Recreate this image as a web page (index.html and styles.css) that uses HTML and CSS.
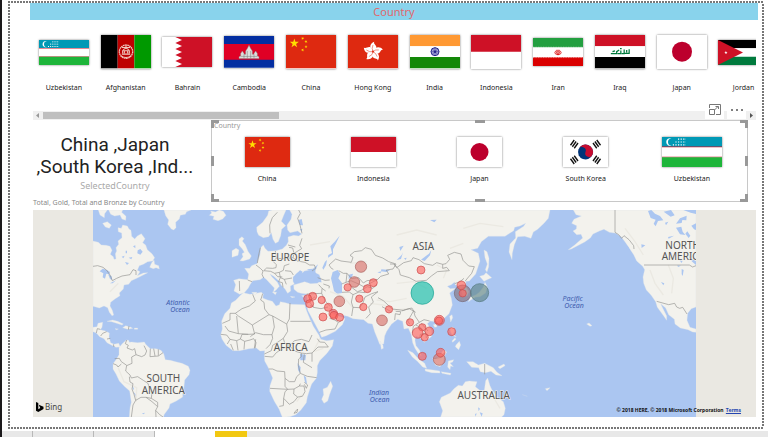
FILE: index.html
```html
<!DOCTYPE html>
<html lang="en">
<head>
<meta charset="utf-8">
<title>Medals by Country</title>
<link rel="stylesheet" href="styles.css">
</head>
<body>
<svg class="defs" width="0" height="0" aria-hidden="true">
  <defs>
    <path id="star" d="M0-6 1.35-1.85H5.7L2.18.71 3.53 4.85 0 2.29-3.53 4.85-2.18.71-5.7-1.85H-1.35Z"/>
    <g id="uz">
      <path fill="#0099b5" d="M0 0H60V10H0Z"/><path fill="#ce1126" d="M0 9.6H60V20.4H0Z"/>
      <path fill="#fff" d="M0 10.2H60V19.8H0Z"/><path fill="#1eb53a" d="M0 20.2H60V30H0Z"/>
      <path fill="#fff" d="M9.5 1.5A3.8 3.8 0 1 0 9.5 8.5 3.3 3.3 0 1 1 9.5 1.5Z"/>
      <path fill="none" stroke="#fff" stroke-width="1.2" stroke-dasharray="1.2 1.4" d="M16 2.2H24M13.4 5H24M10.8 7.8H24"/>
    </g>
    <g id="af">
      <path d="M0 0H20V40H0Z"/><path fill="#be0000" d="M20 0H40V40H20Z"/><path fill="#009900" d="M40 0H60V40H40Z"/>
      <g fill="none" stroke="#f0c9bf"><circle cx="30" cy="20" r="8" stroke-width="1.5" stroke-dasharray="2 .6"/>
      <path stroke-width="1.3" d="M25 23H35M26 22V19Q30 13 34 19V22M28 22V19H32V22M30 12V15M24 25Q30 29 36 25M25 15H35"/></g>
    </g>
    <g id="bh"><path fill="#fff" d="M0 0H60V36H0Z"/><path fill="#ce1126" d="M16 0H60V36H16L24 32.4 16 28.8 24 25.2 16 21.6 24 18 16 14.4 24 10.8 16 7.2 24 3.6Z"/></g>
    <g id="kh">
      <path fill="#032ea1" d="M0 0H60V38H0Z"/><path fill="#e00025" d="M0 9.5H60V28.500H0Z"/>
      <path fill="#ddd" stroke="#888" stroke-width=".5" d="M18 27V25L20 24V21L22 18 24 21V22H26V18L28 15 30 11 32 15 34 18V22H36V21L38 18 40 21V24L42 25V27Z"/>
      <path stroke="#777" stroke-width=".6" d="M20 24.500H40M24 22V27M28 18V27M32 18V27M36 22V27"/>
    </g>
    <g id="cn">
      <path fill="#de2910" d="M0 0H60V40H0Z"/>
      <g fill="#ffde00"><use href="#star" transform="translate(10 10) scale(.95)"/>
      <use href="#star" transform="translate(20 4) rotate(25) scale(.34)"/><use href="#star" transform="translate(24 8) rotate(45) scale(.34)"/>
      <use href="#star" transform="translate(24 14) scale(.34)"/><use href="#star" transform="translate(20 18) rotate(20) scale(.34)"/></g>
    </g>
    <g id="hk">
      <path fill="#de2910" d="M0 0H60V40H0Z"/>
      <g transform="translate(30 20)" fill="#fff">
        <path id="petal" d="M0-1C-5-4-4-10 1.500-12 0-9 5-8 4-4 3-1 1-1 0-1Z"/>
        <use href="#petal" transform="rotate(72)"/><use href="#petal" transform="rotate(144)"/><use href="#petal" transform="rotate(216)"/><use href="#petal" transform="rotate(288)"/>
        <path fill="none" stroke="#de2910" stroke-width=".6" d="M0 0Q-2-4 0-8M0 0Q3-3 7-2M0 0Q4 2 5 6M0 0Q0 4-5 6M0 0Q-4 1-8-2"/>
      </g>
    </g>
    <g id="in">
      <path fill="#ff9933" d="M0 0H60V13.500H0Z"/><path fill="#fff" d="M0 13.500H60V26.500H0Z"/><path fill="#138808" d="M0 26.500H60V40H0Z"/>
      <circle cx="30" cy="20" r="4.800" fill="#a9a9da" stroke="#26268e" stroke-width="1.200"/><path stroke="#26268e" stroke-width=".6" d="M25 20H35M30 15V25M26.500 16.500 33.500 23.500M33.500 16.500 26.500 23.500"/><circle cx="30" cy="20" r="1.500" fill="#26268e"/>
    </g>
    <g id="id"><path fill="#fff" d="M0 0H60V40H0Z"/><path fill="#ce1126" d="M0 0H60V20H0Z"/></g>
    <g id="ir">
      <path fill="#239f40" d="M0 0H60V11.500H0Z"/><path fill="#fff" d="M0 11.500H60V23H0Z"/><path fill="#da0000" d="M0 23H60V34H0Z"/>
      <path stroke="#fff" stroke-width=".6" stroke-dasharray="1 1" d="M0 11H60M0 23.500H60"/>
      <path fill="none" stroke="#da0000" stroke-width="1" d="M30 14V20.500M28.500 14.500Q24 18 28.500 20M31.500 14.500Q36 18 31.500 20M29 15Q27 18 30 20.500Q33 18 31 15"/>
    </g>
    <g id="iq">
      <path fill="#ce1126" d="M0 0H60V13.500H0Z"/><path fill="#fff" d="M0 13.500H60V26.500H0Z"/><path d="M0 26.500H60V40H0Z"/>
      <path fill="none" stroke="#007a3d" stroke-width="1.500" d="M19 22.500H26V20L29 18M27 22.500H31V18.500M32 22.500H35V17.500M35 22H41V17M38 21V18M21 20 24 19M30 16.500H32"/>
    </g>
    <g id="jp"><path fill="#fff" d="M0 0H60V40H0Z"/><circle cx="30" cy="20" r="12" fill="#bc002d"/></g>
    <g id="jo">
      <path d="M0 0H60V10H0Z"/><path fill="#fff" d="M0 10H60V20H0Z"/><path fill="#007a3d" d="M0 20H60V30H0Z"/>
      <path fill="#ce1126" d="M0 0 30 15 0 30Z"/><use href="#star" fill="#fff" transform="translate(9.500 15) scale(.35)"/>
    </g>
    <g id="kr">
      <path fill="#fff" d="M0 0H60V40H0Z"/>
      <g transform="rotate(20 30 20)"><circle cx="30" cy="20" r="10" fill="#003478"/><path fill="#c60c30" d="M20 20A10 10 0 0 1 40 20 5 5 0 0 1 30 20 5 5 0 0 0 20 20Z"/></g>
      <g stroke="#111" stroke-width="1.800">
        <g id="tri"><path d="M10 11 15 4M12.500 13 17.500 6M15 15 20 8"/></g>
        <use href="#tri" transform="matrix(-1 0 0 1 60 0)"/><use href="#tri" transform="matrix(1 0 0 -1 0 40)"/><use href="#tri" transform="rotate(180 30 20)"/>
      </g>
    </g>
  </defs>
</svg>

<main class="canvas">
  <h1 class="banner">Country</h1>

  <section class="slicer" aria-label="Country">
    <div class="flag-strip">
      <button class="tile"><span class="pic"><svg class="flag" viewBox="0 0 60 30"><use href="#uz"/></svg></span>Uzbekistan</button>
      <button class="tile"><span class="pic"><svg class="flag" viewBox="0 0 60 40"><use href="#af"/></svg></span>Afghanistan</button>
      <button class="tile"><span class="pic"><svg class="flag" viewBox="0 0 60 36"><use href="#bh"/></svg></span>Bahrain</button>
      <button class="tile"><span class="pic"><svg class="flag" viewBox="0 0 60 38"><use href="#kh"/></svg></span>Cambodia</button>
      <button class="tile"><span class="pic"><svg class="flag" viewBox="0 0 60 40"><use href="#cn"/></svg></span>China</button>
      <button class="tile"><span class="pic"><svg class="flag" viewBox="0 0 60 40"><use href="#hk"/></svg></span>Hong Kong</button>
      <button class="tile"><span class="pic"><svg class="flag" viewBox="0 0 60 40"><use href="#in"/></svg></span>India</button>
      <button class="tile"><span class="pic"><svg class="flag" viewBox="0 0 60 40"><use href="#id"/></svg></span>Indonesia</button>
      <button class="tile"><span class="pic"><svg class="flag" viewBox="0 0 60 34"><use href="#ir"/></svg></span>Iran</button>
      <button class="tile"><span class="pic"><svg class="flag" viewBox="0 0 60 40"><use href="#iq"/></svg></span>Iraq</button>
      <button class="tile"><span class="pic"><svg class="flag" viewBox="0 0 60 40"><use href="#jp"/></svg></span>Japan</button>
      <button class="tile"><span class="pic"><svg class="flag" viewBox="0 0 60 30"><use href="#jo"/></svg></span>Jordan</button>
    </div>
    <div class="scrollbar">
      <svg viewBox="0 0 10 9"><path fill="#999" d="M6 2V7L3 4.500Z"/></svg>
      <span class="track"><span class="thumb"></span></span>
      <svg viewBox="0 0 10 9"><path fill="#555" d="M4 2V7L7 4.500Z"/></svg>
    </div>
  </section>

  <div class="middle">
    <div class="side">
      <section class="card">
        <p class="value">China ,Japan<br>,South Korea ,Ind...</p>
        <p class="caption">SelectedCountry</p>
      </section>
      <h2 class="map-title">Total, Gold, Total and Bronze by Country</h2>
    </div>
    <section class="selected">
      <h2 class="selected-title">Country</h2>
      <div class="picked">
        <button class="tile"><svg class="flag" viewBox="0 0 60 40"><use href="#cn"/></svg>China</button>
        <button class="tile"><svg class="flag" viewBox="0 0 60 40"><use href="#id"/></svg>Indonesia</button>
        <button class="tile"><svg class="flag" viewBox="0 0 60 40"><use href="#jp"/></svg>Japan</button>
        <button class="tile"><svg class="flag" viewBox="0 0 60 40"><use href="#kr"/></svg>South Korea</button>
        <button class="tile"><svg class="flag" viewBox="0 0 60 30"><use href="#uz"/></svg>Uzbekistan</button>
      </div>
      <i class="handle nw"></i><i class="handle n"></i><i class="handle ne"></i><i class="handle e"></i>
      <i class="handle se"></i><i class="handle s"></i><i class="handle sw"></i><i class="handle w"></i>
      <div class="tools">
        <button class="tool" aria-label="Focus mode"><svg width="12" height="12" viewBox="0 0 12 12" fill="none" stroke="#777"><path d="M.5 4V.5H11.500V10.500H7M.5 5.500H5.500V10.500H.5ZM5.500 6 9 2.500M6.500 2.500H9.500V5"/></svg></button>
        <button class="tool" aria-label="More options"><svg width="14" height="4" viewBox="0 0 14 4" fill="#555"><circle cx="2" cy="2" r="1"/><circle cx="7" cy="2" r="1"/><circle cx="12" cy="2" r="1"/></svg></button>
      </div>
    </section>
  </div>

  <section class="map" aria-label="Map">
    <svg class="world" viewBox="9 15 2169 621">
      <defs><clipPath id="tiles"><path d="M189 15H1998V636H189Z"/></clipPath></defs>
      <path fill="#eae8e2" d="M9 15H2178V636H9Z"/>
      <g clip-path="url(#tiles)">
        <path class="water" d="M189 15H1998V636H189Z"/>
        <g class="land">
          <path d="M189 108 205 112 214 120 228 121 240 124 246 136 241 148 250 155 252 163 258 162 256 146 260 138 258 128 266 118 264 108 276 98 275 84 265 80 264 68 274 70 278 60 292 63 297 72 303 76 305 94 314 102 322 93 334 86 345 101 338 113 347 120 352 134 366 146 374 158 368 168 353 170 340 178 328 182 322 196 330 200 322 212 340 204 353 203 338 211 322 219 304 227 296 238 282 240 280 252 268 264 270 272 256 281 242 292 240 303 247 316 251 330 246 332 238 322 233 308 222 303 208 309 189 304Z"/>
          <path d="M359 187 365 173 372 165 374 178 386 182 388 192 378 188 370 191Z"/>
          <path d="M205 15 210 30 223 38 224 26 232 15ZM236 15 242 28 254 33 270 30 276 42 287 46 288 34 275 22 278 15ZM218 55 226 66 238 70 244 60 232 50Z"/>
          <path d="M402 15 407 32 416 45 413 58 424 72 431 75 438 68 437 52 448 42 451 31 466 28 470 20 483 15Z"/>
          <path d="M538 31 545 24 542 18 556 21 568 15 580 19 588 31 578 42 564 47 549 43 552 34Z"/>
          <path d="M189 367 201 365 204 355 218 352 216 367 211 374 226 378 238 384 237 396 242 413 252 418 266 415 271 426 258 427 245 421 231 413 222 401 209 395 199 384 189 380Z"/>
          <path d="M231 349 248 345 263 349 280 357 276 360 260 355 245 350ZM278 368 287 362 301 366 308 370 293 373ZM313 369H323V373H313ZM255 371 265 372 259 374Z"/>
          <path d="M267 428 276 417 289 405 296 406 298 412 305 411 323 413 343 411 347 418 361 431 378 431 393 436 401 446 406 464 421 466 440 471 456 475 475 484 480 496 477 509 464 525 462 545 458 562 458 576 439 588 420 597 417 609 403 628 400 636 298 636 300 609 304 592 299 558 283 544 268 528 258 507 249 492 249 476 259 463 267 449Z"/>
          <path d="M630 272 640 263 660 268 694 262 700 267 698 279 713 285 727 289 738 303 748 299 751 290 766 293 782 298 824 299 830 318 841 344 850 364 867 391 872 403 890 407 911 404 907 423 891 445 869 467 862 482 862 503 859 520 845 537 839 554 832 576 829 593 812 616 797 629 780 635 757 637 747 612 733 589 719 559 720 542 728 519 714 486 704 468 703 450 704 437 690 438 679 429 657 431 629 437 609 437 588 421 576 402 572 389 577 372 575 348 584 326 600 310 604 294 617 286Z"/>
          <path d="M902 529 908 544 899 568 893 588 882 595 875 583 881 569 879 552 892 547Z"/>
          <path d="M612 258 617 239 611 226 627 221 653 224 656 207 644 190 659 190 665 182 681 176 685 163 690 150 692 128 700 120 705 130 714 139 738 137 757 132 769 121 775 110 774 96 791 91 806 93 815 87 803 78 780 83 773 75 771 60 783 43 786 28 779 15 1560 15 1555 40 1542 55 1523 73 1510 81 1503 100 1484 94 1463 95 1453 119 1447 145 1446 164 1437 141 1440 117 1457 99 1456 80 1481 64 1487 55 1470 63 1454 67 1451 77 1425 94 1375 94 1354 110 1343 130 1323 134 1345 145 1350 168 1337 207 1318 228 1308 229 1306 242 1317 260 1311 273 1298 272 1294 257 1286 244 1275 239 1274 231 1264 239 1252 244 1261 251 1277 250 1259 264 1264 280 1267 300 1257 326 1241 341 1218 350 1201 348 1192 356 1205 376 1205 394 1191 406 1182 412 1179 403 1170 399 1157 392 1155 407 1158 422 1169 436 1174 453 1164 444 1155 430 1148 413 1144 389 1135 370 1122 372 1118 349 1103 343 1084 358 1070 379 1064 393 1061 417 1049 418 1042 400 1034 380 1027 357 1014 355 1001 344 969 341 953 334 930 329 918 319 898 310 906 324 919 331 935 336 945 341 937 359 916 379 889 392 875 397 866 377 852 351 834 317 830 301 832 282 830 267 813 265 803 262 792 253 791 240 801 237 824 230 842 236 862 235 874 226 868 209 851 200 838 195 823 198 816 205 802 203 789 216 789 229 793 237 781 243 782 258 773 265 765 252 754 241 747 228 731 214 720 207 726 216 742 232 748 244 739 254 730 262 733 249 721 236 710 224 701 217 690 224 668 227 660 239 655 249 643 263 629 268Z"/>
          <path d="M680 67 698 52 713 31 716 18 727 15 768 15 760 34 754 49 767 62 755 73 752 92 745 110 736 115 729 103 724 83 716 95 700 98 686 91 681 80Z"/>
          <path d="M627 102 636 95 642 101 637 108 646 119 654 139 664 153 659 162 639 168 630 167 639 155 636 146 643 142 637 132 627 121ZM606 137 618 130 627 135 624 151 606 157Z"/>
          <path d="M665 262 681 262 676 270ZM727 261 740 262 736 269ZM815 272 828 270 820 276ZM781 274 795 276 786 278Z"/>
          <path d="M1349 214 1362 210 1368 203 1385 218 1374 223 1362 229ZM1365 232 1372 246 1367 264 1350 275 1336 277 1321 286 1315 290 1320 277 1338 269 1348 262 1360 246ZM1362 135 1371 140 1377 160 1376 185 1371 201 1366 194 1372 177 1365 158Z"/>
          <path d="M1259 334 1266 329 1268 338 1262 351ZM1210 359 1219 357 1221 365 1214 367ZM1259 370 1268 366 1275 373 1270 387 1279 396 1270 392 1263 384ZM1278 420 1288 409 1292 420 1286 434 1276 425ZM1266 408 1275 398 1278 403 1268 412Z"/>
          <path d="M1133 436 1149 443 1166 462 1184 475 1190 490 1178 486 1162 469 1147 456ZM1185 492 1204 494 1229 498 1230 504 1205 503 1186 498ZM1208 460 1218 462 1232 448 1241 434 1250 441 1243 454 1240 474 1230 485 1216 480ZM1255 468 1271 464 1268 471 1260 474 1270 485 1262 483 1260 494 1253 486ZM1234 500 1263 505 1261 510 1236 505ZM1310 470 1329 470 1345 480 1364 475 1390 488 1401 502 1416 512 1398 510 1383 499 1366 503 1351 500 1346 488 1325 487ZM1404 486 1422 477 1425 482 1410 491Z"/>
          <path d="M1228 590 1234 577 1261 564 1271 552 1285 541 1297 543 1306 530 1318 528 1341 530 1336 545 1352 558 1363 556 1367 527 1373 519 1380 542 1386 555 1404 578 1420 590 1426 610 1422 629 1415 636H1232L1238 617Z"/>
          <path d="M1050 408 1059 421 1060 430 1054 433ZM1477 569 1492 574M1546 551 1560 548 1551 557ZM1670 357 1677 354 1686 362 1680 364Z"/>
          <path d="M1630 15 1638 29 1654 33 1632 43 1625 55 1640 62 1639 72 1629 78 1640 89 1653 88 1658 99 1634 120 1615 134 1624 132 1664 111 1681 99 1689 87 1710 77 1722 73 1738 82 1758 85 1774 96 1786 112 1799 131 1811 149 1820 168 1838 184 1844 194 1839 216 1841 235 1849 255 1863 270 1877 290 1882 307 1899 330 1910 346 1910 333 1898 309 1892 296 1907 309 1916 329 1933 343 1935 357 1951 369 1974 374 1988 381 1998 382V372L1980 367 1971 346 1973 325 1984 311 1998 306V15Z"/>
        </g>
        <g class="water">
          <path d="M209 199 218 191 231 195 240 201 238 208 229 206 225 221 218 217 220 205ZM234 207 245 214 247 225 240 222ZM240 235 252 229 258 226 248 235ZM287 137H291V145H287ZM323 136 331 132 338 140 331 149 322 145ZM275 155 284 152 280 160ZM296 158 307 156 304 163ZM285 171 297 174 291 180ZM309 124 316 121 316 130Z"/>
          <path d="M908 201 923 195 931 206 925 220 936 234 936 251 936 264 921 266 912 258 908 240 903 220Z"/>
          <path d="M796 210 810 196 818 200 815 207 830 207 842 197 830 193 849 191 864 178 856 197 857 207 870 220 875 232 858 231 836 224 812 231 798 232Z"/>
          <path d="M956 209 969 206 966 216 956 222ZM1054 193 1080 195 1069 201 1053 199ZM1100 165 1115 150 1119 142 1113 162ZM1042 202 1055 199 1051 205ZM1173 164 1197 146 1204 135 1200 151 1184 168ZM1200 45 1220 44 1213 52ZM806 45 815 42 819 61 809 60ZM810 73 817 71 815 81ZM877 188 885 170 891 165 888 181 880 194ZM895 150 906 144 901 124 914 110 929 92 919 113 909 133 909 148 894 158ZM1122 160 1130 158 1127 165ZM1108 126 1121 122 1111 138ZM810 446 828 450 826 466 811 466ZM803 474 812 487 810 505 804 495ZM821 511 828 517 831 538 825 532Z"/>
          <path d="M1854 18 1864 15 1875 26 1890 33 1900 46 1884 48 1877 64 1871 56 1877 44 1862 39ZM1901 20 1923 15 1934 31 1922 35ZM1950 40 1970 32 1969 46 1957 45 1955 54 1938 56ZM1960 15H1998V27L1982 23ZM1905 53 1915 50 1908 61ZM1938 68 1954 65 1958 80 1966 90 1950 88ZM1984 62 1998 55V75L1992 73ZM1972 79 1981 92 1976 99 1966 86ZM1834 118 1846 121 1835 129ZM1783 113 1795 126 1800 137 1791 132ZM1921 139 1927 150 1924 161 1918 149ZM1980 143 1985 156 1978 160ZM1949 165 1958 168 1954 174ZM1984 160 1998 169V180L1985 169ZM1893 231 1903 235 1900 241ZM1955 192 1961 195 1958 213 1955 208ZM1942 181 1953 182 1944 186ZM1914 96 1932 92 1916 101Z"/>
          <path d="M1344 607 1350 611 1346 619ZM1335 627 1340 625 1337 635ZM1349 622 1358 625 1355 635ZM336 625 346 623 340 628ZM305 535 312 552 309 555ZM310 560 317 568 317 577Z"/>
        </g>
        <g class="relief">
          <path d="M1020 295 1060 300 1095 315 1150 310M1040 285 1080 290 1130 280M1100 235 1150 230 1190 250M1220 180 1250 195 1240 220M960 175 1010 170M840 120 900 110M1100 90 1160 75 1220 90M1300 70 1350 55 1420 65M1260 130 1300 115M265 490 282 530 320 548 318 590M1785 70 1815 110 1840 150M1860 195 1875 235 1900 270M1915 180 1930 220 1925 265M240 260 265 235M870 400 850 440 880 430M800 590 815 570M1395 585 1410 610M900 260 940 275 970 310"/>
        </g>
        <g class="borders">
          <path d="M189 184 203 182 219 187 230 196 240 210 247 227 260 220 276 213 300 209 309 194 318 197 318 210"/>
          <path d="M199 384 202 371 211 373M212 393 218 385 230 380M231 402 241 400M250 418 252 426M297 363 295 374"/>
          <path d="M290 405 286 416 295 421 291 429 307 435 314 431 318 449 305 456 306 475 290 482M254 461 268 460 274 470 290 481 287 498 300 510 304 519M318 449 335 455 345 450 350 438 342 422M361 431 360 455 385 453 399 443M371 431 375 453M385 433 385 452M304 519 323 515 340 526 354 535 358 551 366 562 364 580 383 592 383 605 377 616 388 628 399 636M249 476 260 480 264 486 274 477M298 515 300 531 309 536 306 552 312 568 317 586 309 600 304 636M317 586 333 577 348 577 364 580M348 577 366 590 383 605M377 616 378 636"/>
          <path d="M668 268 676 288 658 303 636 311 616 325 625 333 667 360 717 329 704 312 702 292 692 285 698 266M616 325H600V345L577 355M667 360 674 387 655 388 625 386 596 378 585 363M625 386 620 333M717 329 728 333 770 357 778 342 780 294M781 349H842M770 357 773 379 760 400 764 414 779 421 794 407 814 403 837 410 846 390M728 333 733 366 726 389 700 389 677 383 661 395M726 389 728 400 720 419 708 431M760 400 741 413 728 421 724 437 703 447M572 388 590 390 600 403 620 407 631 402 644 409 642 433M600 403 592 417M631 402 636 388 655 388M644 409 660 405 671 401M677 403 673 430M671 401 678 413 675 430M602 417 610 436M620 407 624 436"/>
          <path d="M704 454 728 456 739 443 754 433 778 423 797 439 814 444 829 446 846 444 864 426 895 426 884 412 869 411 862 401M814 444 814 455 806 462 805 481 811 505 800 515 794 530 778 530 765 520 764 500 741 498 728 492 716 492M720 550 773 553M765 520 765 544 773 553 792 552 808 543 811 536M811 505 832 514 860 518M820 472 846 488M820 472 823 448M846 444 846 470M773 553 765 560 761 580 760 602 748 604M761 580 778 598 792 590 803 576 791 567 792 552M803 576 817 574 825 560 822 543 808 543M797 618 803 612 801 622 792 625ZM823 532 833 540 829 550 823 538"/>
          <path d="M628 228 629 258M653 225 666 230M678 180 691 190 699 198 696 208 701 219M691 128 686 150 682 174M736 138 739 160 729 169 739 179 738 188 728 190 710 189 701 197 722 199 734 205 748 202 760 196 763 182 778 177M739 160 761 161 789 158 792 145 788 129 777 127M792 145 815 131 809 121 816 100M774 120 796 126M816 85 810 60 803 40 811 25 806 15M720 85 719 60 727 38 742 22M748 202 751 218 763 223 769 238M763 223 786 219M765 197 783 199 790 210M751 218 746 230 757 233 759 247M734 205 743 215 757 216M789 158 802 168 825 172 839 180 853 180 857 190 846 198M863 218 885 226 899 225M880 237 898 243 897 250M866 239 876 250 875 265 830 267M876 250 887 258M842 270 838 286 830 297M855 275 838 289 850 307 873 311 894 306M875 265 886 288 900 304M840 302 851 304M868 382 888 375 915 372 925 352 914 345 899 340M934 347 926 352"/>
          <path d="M897 180 917 162 933 168 964 172 969 157 960 151 973 140 995 137 1006 128 1024 133 1036 151 1058 159 1076 170 1098 177M897 180 904 190 910 193M1098 177 1089 192 1069 195 1076 207 1052 214 1042 224 1011 227 1000 234 986 218 965 221 951 205 940 205 926 197M951 205 948 232 935 237M948 232 963 227 988 238 1002 246 1018 236M965 247 982 260 994 256 1012 245 1029 250 1041 237M1018 236 1042 224M936 262 958 261 969 269 964 291 969 307 965 333M969 307 989 308 999 293 1005 276 1025 266 1044 260M969 269 987 261 1006 263M1008 340 1021 326 1016 306 1030 291 1024 276 1044 260M1044 278 1060 287 1087 312 1120 316 1138 311 1157 322M1056 305 1082 319M1097 319 1112 320 1110 329 1096 326 1094 345M1115 318 1126 314 1145 309 1151 317 1142 333 1133 348 1139 357"/>
          <path d="M1080 177 1092 177 1100 188 1121 173 1144 167 1149 158 1167 164 1183 176 1208 181 1220 173 1238 178 1248 176 1259 163 1253 151 1273 142 1293 147 1299 166 1316 183 1333 185 1325 205 1313 219 1305 229M1092 177 1107 194 1111 210 1138 218 1158 229 1189 226 1204 213 1222 200 1258 197 1250 187 1238 190 1238 178M1274 236 1290 230 1302 220M1294 251 1304 247M1151 317 1155 333 1168 352 1182 344 1199 348M1168 352 1150 364 1147 384M1158 360 1173 369 1188 384 1171 388 1169 399M1173 354 1194 378M1188 384 1189 399M1364 477V508M1210 461 1234 457 1243 443"/>
          <path d="M1755 15V82L1766 89 1775 100 1782 92 1797 104 1811 122 1812 132M1842 180H1978L1988 186 1998 182M1880 289 1916 299 1934 295 1940 306 1949 310 1958 307 1971 327"/>
        </g>
        <g class="region">
          <text x="780" y="169">EUROPE</text><text x="782" y="438">AFRICA</text><text x="1180" y="135">ASIA</text>
          <text x="400" y="532">SOUTH<tspan x="400" dy="34">AMERICA</tspan></text><text x="1361" y="583">AUSTRALIA</text>
          <text x="1958" y="131">NORTH<tspan x="1960" dy="34">AMERICA</tspan></text>
        </g>
        <g class="sea">
          <text x="444" y="299">Atlantic<tspan x="450" dy="22">Ocean</tspan></text>
          <text x="1047" y="570">Indian<tspan x="1049" dy="22">Ocean</tspan></text>
          <text x="1628" y="287">Pacific<tspan x="1632" dy="22">Ocean</tspan></text>
        </g>
        <g class="bubbles">
          <circle class="mid" cx="993" cy="185" r="17"/><circle class="mid" cx="973" cy="231" r="16"/><circle cx="1030" cy="233" r="12"/><circle cx="1012" cy="251" r="12"/><circle cx="953" cy="247" r="11"/>
          <circle class="mid" cx="928" cy="289" r="16"/><circle cx="988" cy="281" r="11"/><circle cx="1000" cy="306" r="11"/><circle cx="1077" cy="313" r="11"/><circle class="mid" cx="1056" cy="346" r="16"/>
          <circle cx="848" cy="274" r="12"/><circle cx="833" cy="281" r="12"/><circle cx="839" cy="296" r="12"/><circle cx="875" cy="285" r="11"/><circle cx="895" cy="307" r="12"/><circle cx="879" cy="336" r="12"/>
          <circle cx="910" cy="326" r="13"/><circle cx="912" cy="331" r="12"/><circle cx="929" cy="337" r="12"/><circle cx="1173" cy="195" r="12"/>
          <circle class="gold" cx="1177" cy="264" r="34"/><circle class="mauve" cx="1298" cy="265" r="25"/><circle class="slate" cx="1349" cy="263" r="27"/><circle cx="1294" cy="241" r="13"/><circle cx="1298" cy="265" r="11"/>
          <circle cx="1228" cy="346" r="15"/><circle cx="1227" cy="347" r="11"/><circle cx="1140" cy="352" r="11"/><circle cx="1177" cy="367" r="11"/><circle cx="1163" cy="384" r="16"/><circle cx="1198" cy="379" r="13"/><circle cx="1184" cy="397" r="11"/>
          <circle cx="1265" cy="380" r="12"/><circle cx="1177" cy="454" r="12"/><circle class="mid" cx="1228" cy="463" r="18"/><circle cx="1232" cy="443" r="13"/>
        </g>
      </g>
    </svg>
    <div class="bing"><svg width="8" height="10" viewBox="0 0 8 10"><path d="M0 0 2.300.9V7.200L4.300 6.100 3.400 4.200 2.800 2.800 7.500 4.700V7L2.300 10 0 8.700Z"/></svg>Bing</div>
    <p class="credit">© 2018 HERE, © 2018 Microsoft Corporation <a href="#">Terms</a></p>
  </section>
</main>

<footer class="tabs"><span class="tab lead"></span><span class="tab"></span><span class="tab"></span><span class="gap"></span><span class="add"></span><span class="rest"></span></footer>
</body>
</html>
```
FILE: styles.css
```css
* { box-sizing: border-box; }

body {
  margin: 0;
  min-height: 100vh;
  display: flex;
  flex-direction: column;
  background: #fff;
  border-left: 2px solid #1c1a1c;
  font-family: "Noto Sans", "Open Sans", sans-serif;
  color: #222;
  overflow: hidden;
}

.defs { position: absolute; }
h1, h2, p { margin: 0; font-weight: 400; }

button {
  border: 0;
  padding: 0;
  background: none;
  font: inherit;
  color: inherit;
}

.canvas {
  margin: 1px 4px 2px 6px;
  padding: 2px 8px 12px 25px;
  background:
    repeating-linear-gradient(90deg, #777 0 2px, #fff 2px 3px) top / 100% 2px no-repeat,
    repeating-linear-gradient(90deg, #777 0 2px, #fff 2px 3px) bottom / 100% 2px no-repeat,
    repeating-linear-gradient(#777 0 2px, #fff 2px 3px) left / 2px 100% no-repeat,
    repeating-linear-gradient(#777 0 2px, #fff 2px 3px) right / 2px 100% no-repeat;
}

.banner {
  margin: 0 -2px 0 -3px;
  padding-top: 1px;
  background: #89d3ec;
  color: #e0696e;
  font-size: 11px;
  line-height: 16px;
  text-align: center;
}

.flag-strip {
  display: flex;
  height: 91px;
  padding-top: 12px;
  overflow: hidden;
}

.tile {
  display: flex;
  flex-direction: column;
  align-items: center;
  font-size: 7px;
  line-height: 10px;
  white-space: nowrap;
}

.flag-strip .tile { flex: 0 0 calc(100% / 11.7); }

.pic {
  display: flex;
  align-items: center;
  height: 40px;
  margin-bottom: 11px;
}

.flag {
  display: block;
  box-shadow: 0 0 2px #777;
}

.flag-strip .flag { width: 50px; }

.scrollbar {
  display: flex;
  height: 9px;
  background: #f0f0f0;
}

.scrollbar svg { width: 10px; height: 9px; }
.track { flex: 1; padding: 1px 0; }

.thumb {
  display: block;
  width: 33.6%;
  height: 7px;
  background: #bfbfbf;
}

.middle { display: flex; align-items: flex-start; }

.side {
  flex: 0 0 178px;
  height: 90px;
  display: flex;
  flex-direction: column;
  justify-content: space-between;
}

.card { padding: 14px 14px 0 0; text-align: center; }

.value {
  font-family: Roboto, sans-serif;
  font-size: 19px;
  line-height: 22px;
  white-space: nowrap;
}

.caption { padding-top: 1px; color: #aaa; font-size: 9px; line-height: 14px; }
.map-title { color: #888; font-size: 7px; line-height: 14px; white-space: nowrap; }

.selected {
  position: relative;
  flex: 1;
  height: 82px;
  margin-right: 8px;
  border: 1px solid #c8c8c8;
  background: #fff;
}

.selected-title { padding-left: 2px; color: #999; font-size: 7px; line-height: 9px; }

.picked {
  display: grid;
  grid-template-columns: repeat(5, 1fr);
  padding: 7px 2px 0;
}

.picked .flag { height: 30px; margin-bottom: 7px; }

.handle { position: absolute; border: 0 solid #999; }
.nw, .ne, .se, .sw { width: 8px; height: 8px; }
.nw { top: -1px; left: -1px; border-width: 3px 0 0 3px; }
.ne { top: -1px; right: -1px; border-width: 3px 3px 0 0; }
.se { bottom: -1px; right: -1px; border-width: 0 3px 3px 0; }
.sw { bottom: -1px; left: -1px; border-width: 0 0 3px 3px; }
.n, .s { left: 50%; margin-left: -5px; width: 10px; border-top-width: 3px; }
.n { top: -1px; }
.s { bottom: -1px; }
.e, .w { top: 50%; margin-top: -5px; height: 10px; border-left-width: 3px; }
.e { right: -1px; }
.w { left: -1px; }

.tools {
  position: absolute;
  top: -21px;
  right: 1px;
  display: flex;
  gap: 3px;
}

.tool {
  display: flex;
  align-items: center;
  justify-content: center;
  width: 19px;
  height: 19px;
  background: #fff;
}

.map { position: relative; }
.world { display: block; width: 100%; }
.water { fill: #abc6f1; }
.land { fill: #f3f2ed; stroke: #dfe5ea; stroke-width: 1; }
.borders { fill: none; stroke: #949491; stroke-width: 2; }
.relief { fill: none; stroke: #ebe9e2; stroke-width: 4; }
.region { font-size: 30px; text-anchor: middle; fill: #555; stroke: #f3f2ed; stroke-width: 3; paint-order: stroke; }
.sea { font-size: 21px; font-style: italic; text-anchor: middle; fill: #3f5cae; }
.bubbles { fill: #fd625e; fill-opacity: .65; stroke: #c94a4c; stroke-opacity: .65; stroke-width: 3; }
.bubbles .mid { fill: #d9716c; stroke: #a6605c; }
.bubbles .gold { fill: #22c1ae; fill-opacity: .7; stroke: #169f91; }
.bubbles .mauve { fill: #857580; stroke: #77646e; }
.bubbles .slate { fill: #5f8588; stroke: #527779; }

.bing {
  position: absolute;
  left: 3px;
  bottom: 4px;
  display: flex;
  align-items: center;
  gap: 1px;
  font-size: 8px;
  line-height: 12px;
  color: #444;
}

.credit {
  position: absolute;
  right: 15px;
  bottom: 2px;
  font-size: 5px;
  font-weight: 700;
  line-height: 9px;
  color: #111;
}

.credit a { margin-left: 1px; color: #2546b0; }

.tabs { flex: 1 0 6px; display: flex; }
.tab { width: 61px; background: #e8e8e8; border-right: 1px solid #b8b8b8; }
.lead { width: 31px; }
.gap { width: 60px; }
.add { width: 32px; background: #f2c811; }
.rest { flex: 1; background: #e8e8e8; }
```
